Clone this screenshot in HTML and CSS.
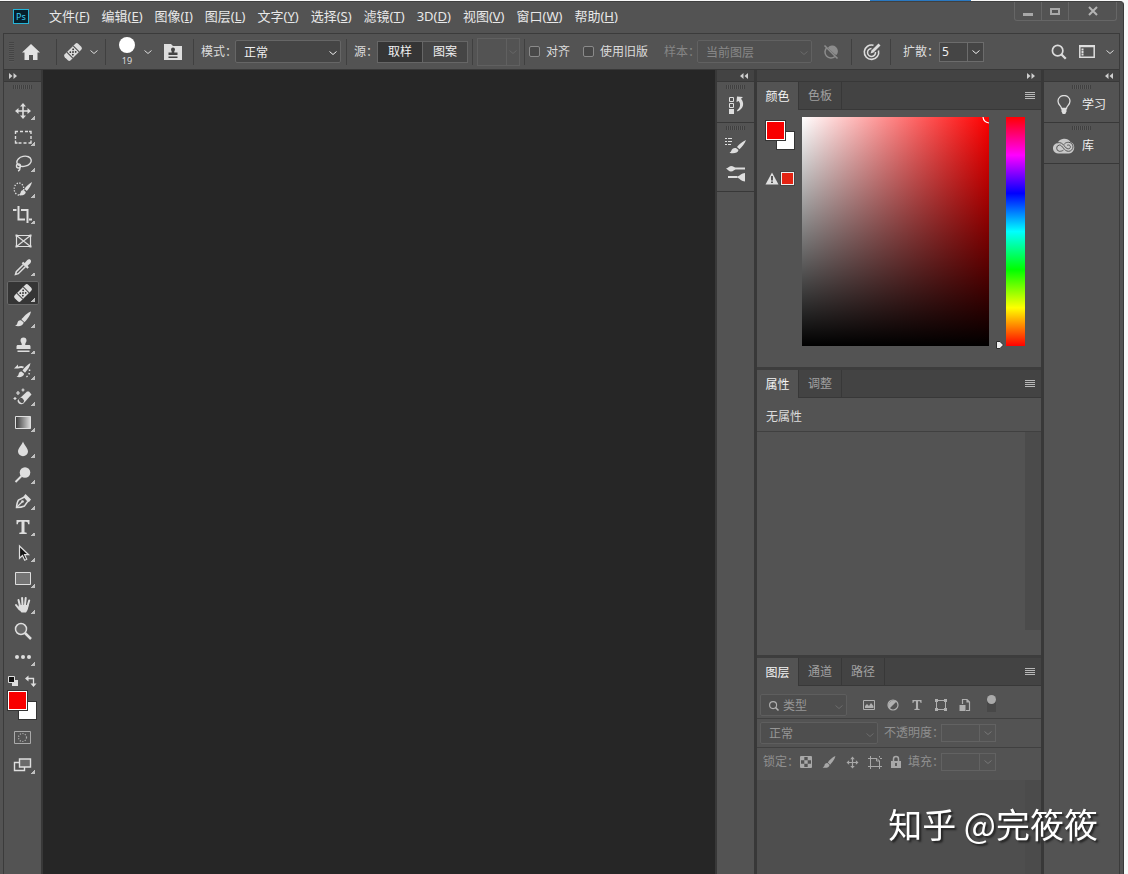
FILE: index.html
```html
<!DOCTYPE html>
<html lang="zh-CN">
<head>
    <meta charset="UTF-8">
    <meta name="viewport" content="width=device-width, initial-scale=1.0">
    <title>Photoshop</title>
    <link rel="stylesheet" href="styles.css">
</head>
<body>
    <!-- shared icons -->
    <svg class="sprite" aria-hidden="true">
        <symbol id="i-chevron" viewBox="0 0 8 8"><path d="M.5 2.500l3.500 3 3.500-3" fill="none" stroke="currentColor" stroke-width="1"/></symbol>
        <symbol id="i-menu" viewBox="0 0 10 8"><path d="M0 .5h10M0 2.500h10M0 4.500h10M0 6.500h10" stroke="currentColor" stroke-width="1"/></symbol>
        <symbol id="i-left" viewBox="0 0 8 6"><path d="M3.500 0v6L0 3zM8 0v6L4.500 3z" fill="currentColor"/></symbol>
        <symbol id="i-right" viewBox="0 0 8 6"><path d="M0 0v6l3.500-3zM4.500 0v6L8 3z" fill="currentColor"/></symbol>
        <symbol id="i-move" viewBox="0 0 20 20"><path d="M10 4v12M4 10h12" stroke="currentColor" stroke-width="1.600"/><path d="M10 2l3 3.500H7zM10 18l3-3.500H7zM2 10l3.500-3v6zM18 10l-3.500-3v6z" fill="currentColor"/></symbol>
        <symbol id="i-brush" viewBox="0 0 20 20"><path d="M18 2.500c-3.500 1.200-7.500 5-9.500 8l3 2.800C14.500 10 17.500 6 18 2.500z" fill="currentColor"/><path d="M8 11.300c-2.300-.2-3.300 1.200-3.600 2.700-.3 1.400-1 2.200-2.400 2.800 3.800 1 8.300.2 8.700-3.200z" fill="currentColor"/></symbol>
        <symbol id="i-bandaid" viewBox="0 0 20 20"><g transform="rotate(-45 10 10)"><rect x="0.500" y="5.800" width="19" height="8.400" rx="2" fill="currentColor"/><path d="M5.500 5.800v8.400M14.500 5.800v8.400" stroke="#484848" stroke-width="1"/><g fill="#333"><circle cx="10" cy="10" r=".9"/><circle cx="8" cy="8.200" r=".9"/><circle cx="12" cy="8.200" r=".9"/><circle cx="8" cy="11.800" r=".9"/><circle cx="12" cy="11.800" r=".9"/></g></g></symbol>
        <symbol id="i-search" viewBox="0 0 20 20"><circle cx="8.500" cy="8.500" r="5.800" fill="none" stroke="currentColor" stroke-width="1.900"/><path d="M12.500 12.500l5 5" stroke="currentColor" stroke-width="2.600"/></symbol>
        <symbol id="i-type" viewBox="0 0 20 20"><path d="M3.500 3h13v4.200h-1.400c-.2-1.800-.6-2.500-2.200-2.500h-1.400v10.600l2.200.5V17H6.300v-1.200l2.200-.5V4.700H7.100c-1.600 0-2 .7-2.200 2.500H3.500z" fill="currentColor"/></symbol>
    </svg>

    <div class="backdrop"><span class="backdrop-tab"></span></div>

    <div class="window">
        <header class="menubar">
            <span class="logo">Ps</span>
            <nav class="menus">
                <button>文件(<u>F</u>)</button>
                <button>编辑(<u>E</u>)</button>
                <button>图像(<u>I</u>)</button>
                <button>图层(<u>L</u>)</button>
                <button>文字(<u>Y</u>)</button>
                <button>选择(<u>S</u>)</button>
                <button>滤镜(<u>T</u>)</button>
                <button>3D(<u>D</u>)</button>
                <button>视图(<u>V</u>)</button>
                <button>窗口(<u>W</u>)</button>
                <button>帮助(<u>H</u>)</button>
            </nav>
            <div class="window-controls">
                <button aria-label="最小化"><svg width="12" height="12" viewBox="0 0 12 12"><path d="M1 8h10v3H1z" fill="#a8a8a8"/></svg></button>
                <button aria-label="最大化"><svg width="12" height="12" viewBox="0 0 12 12"><path d="M2 4h8v5H2z" fill="none" stroke="#a8a8a8" stroke-width="2"/></svg></button>
                <button class="close" aria-label="关闭"><svg width="12" height="12" viewBox="0 0 12 12"><path d="M2 2l8 8M10 2l-8 8" stroke="#b4b4b4" stroke-width="2"/></svg></button>
            </div>
        </header>

        <div class="frame">
            <div class="options">
                <span class="grip-v"></span>
                <button class="home" aria-label="主页"><svg width="18" height="16" viewBox="0 0 18 16"><path d="M9 0L0 8.500h2.500V16H7v-5h4v5h4.500V8.500H18z" fill="#e2e2e2"/></svg></button>
                <span class="divider"></span>
                <button class="preset" aria-label="污点修复画笔"><svg width="20" height="20"><use href="#i-bandaid"/></svg><svg width="8" height="8"><use href="#i-chevron"/></svg></button>
                <span class="divider"></span>
                <button class="preset brush-size" aria-label="画笔大小"><span class="brush-preview"><i></i>19</span><svg width="8" height="8"><use href="#i-chevron"/></svg></button>
                <button class="brush-panel" aria-label="画笔设置"><svg width="18" height="18" viewBox="0 0 18 18"><path d="M0 1h7l2 2h9v14H0z" fill="#dedede"/><path d="M7 6.500a2 2 0 114 0c0 1-.8 1.500-.8 3h3.300V12h-9V9.500h3.300c0-1.500-.8-2-.8-3zM4.500 13.500h9V15h-9z" fill="#444"/></svg></button>
                <span class="divider"></span>
                <label for="mode">模式：</label>
                <span class="select mode"><select id="mode"><option>正常</option></select><svg width="8" height="8"><use href="#i-chevron"/></svg></span>
                <span class="divider"></span>
                <span class="source-label">源：</span>
                <div class="segmented">
                    <button class="on">取样</button><button>图案</button>
                </div>
                <span class="divider"></span>
                <button class="pattern" aria-label="图案拾色器" disabled><span></span><svg width="8" height="8"><use href="#i-chevron"/></svg></button>
                <span class="divider"></span>
                <label class="check"><input type="checkbox">对齐</label>
                <label class="check legacy"><input type="checkbox">使用旧版</label>
                <label class="dim" for="sample">样本：</label>
                <span class="select sample"><select id="sample" disabled><option>当前图层</option></select><svg width="8" height="8"><use href="#i-chevron"/></svg></span>
                <button class="ignore" aria-label="忽略调整图层" disabled><svg width="16" height="16" viewBox="0 0 16 16"><path d="M4 3.500A5.500 5.500 0 1012 12.500" fill="none" stroke="currentColor" stroke-width="1.500"/><path d="M5 3.500a5.500 5.500 0 018.500 7.500L12 10.500 6 5z" fill="currentColor"/><path d="M1.500 1.500l13 13" stroke="currentColor" stroke-width="1.600"/></svg></button>
                <span class="divider"></span>
                <button class="pressure" aria-label="压力控制大小"><svg width="18" height="18" viewBox="0 0 18 18" fill="none" stroke="#dcdcdc"><path d="M10.500 2.300A7.200 7.200 0 1015.500 7.500" stroke-width="1.600"/><path d="M8.500 5.500A4 4 0 1012.500 9" stroke-width="1.500"/><path d="M7.500 10.500l1-3L15.500.5l2 2-7 7z" fill="#dcdcdc" stroke="none"/></svg></button>
                <span class="divider"></span>
                <label class="diffusion-label" for="diffusion">扩散：</label>
                <span class="combo"><input id="diffusion" type="text" value="5"><button aria-label="扩散选项"><svg width="8" height="8"><use href="#i-chevron"/></svg></button></span>
                <div class="options-end">
                    <button aria-label="搜索"><svg width="18" height="18"><use href="#i-search"/></svg></button>
                    <button aria-label="工作区"><svg width="16" height="13" viewBox="0 0 16 13"><path d="M.8 1.500h14.400v10.700H.8z" fill="none" stroke="#dedede" stroke-width="1.500"/><path d="M0 0h16v2H0zM2.500 3.500h2v2h-2zM2.500 6h2v2h-2zM2.500 8.500h2v2h-2z" fill="#dedede"/></svg></button>
                    <button aria-label="选择工作区"><svg width="8" height="8"><use href="#i-chevron"/></svg></button>
                </div>
            </div>

            <div class="workspace">
                <aside class="toolbar">
                    <div class="strip strip-left"><svg width="8" height="6"><use href="#i-right"/></svg></div>
                    <span class="grip"></span>
                    <div class="tools">
                        <button class="tool more" aria-label="移动"><svg viewBox="0 0 20 20"><use href="#i-move"/></svg></button>
                        <button class="tool more" aria-label="矩形选框"><svg viewBox="0 0 20 20"><path d="M2.500 7V4.500H5M7 4.500h3M12 4.500h3M16 4.500h2V7M18 9v3M18 13.500V16h-2.500M13.500 16h-3M8.500 16h-3M4.500 16h-2v-2.500M2.500 12V9" fill="none" stroke="#dedede" stroke-width="1.400"/></svg></button>
                        <button class="tool more" aria-label="套索"><svg viewBox="0 0 20 20" fill="none" stroke="#dedede" stroke-width="1.400"><ellipse cx="11" cy="8.300" rx="7.300" ry="5" transform="rotate(-12 11 8)"/><circle cx="5.500" cy="13" r="2"/><path d="M6.500 14.500c1 1.500 0 3-1.500 3.500"/></svg></button>
                        <button class="tool more" aria-label="快速选择"><svg viewBox="0 0 20 20"><ellipse cx="6" cy="10" rx="4.800" ry="6" fill="none" stroke="#dedede" stroke-width="1.300" stroke-dasharray="1.300 1.500"/><path d="M19 3c-3 1.500-6 4.500-7.500 7l2.300 2C16 9.500 18.500 6 19 3zM10.500 11c-2 0-2.600 1.300-2.900 2.500-.2 1-1 2-2 2.500 3.500.9 7 0 7.200-3z" fill="#dedede"/></svg></button>
                        <button class="tool more" aria-label="裁剪"><svg viewBox="0 0 20 20" fill="none" stroke="#dedede" stroke-width="2"><path d="M5.500 1v13.500H12M8 5h6.500v13M0 5h3.500M16 14.500h3"/></svg></button>
                        <button class="tool" aria-label="图框"><svg viewBox="0 0 20 20"><path d="M3.500 4.500h14v11h-14zM3.500 4.500l14 11M17.500 4.500l-14 11" fill="none" stroke="#dedede" stroke-width="1.200"/><path d="M2.500 3.500h2v2h-2zM16.500 3.500h2v2h-2zM2.500 14.500h2v2h-2zM16.500 14.500h2v2h-2z" fill="#dedede"/></svg></button>
                        <button class="tool more" aria-label="吸管"><svg viewBox="0 0 20 20"><path d="M10.500 7.500L3.300 14.700l-.8 2.800 2.800-.8 7.200-7.200" fill="none" stroke="#dedede" stroke-width="1.500"/><path d="M8.700 6.200l1.500-1.500 1.500 1.200 2.400-2.700c2.600-2.300 5.300.7 3.200 3l-2.700 2.500 1.300 1.500-1.500 1.500z" fill="#dedede"/></svg></button>
                        <button class="tool more active" aria-label="污点修复画笔"><svg viewBox="0 0 20 20"><use href="#i-bandaid"/></svg></button>
                        <button class="tool more" aria-label="画笔"><svg viewBox="0 0 20 20"><use href="#i-brush"/></svg></button>
                        <button class="tool more" aria-label="仿制图章"><svg viewBox="0 0 20 20"><path d="M7.500 5.500a3 3 0 116 0c0 2-1.300 2-1.300 4.500h3.800c1 0 1.500.6 1.500 1.500V14h-14v-2.500c0-.9.500-1.500 1.500-1.500h3.800c0-2.500-1.300-2.500-1.300-4.500zM4.500 15.500h12V17h-12z" fill="#dedede"/></svg></button>
                        <button class="tool more" aria-label="历史记录画笔"><svg viewBox="0 0 20 20"><path d="M17.500 2c-3 1.500-6.500 5-8 7.500l2.500 2.200C14.300 9 17.300 5.500 17.500 2zM8.500 10.500c-2.200 0-2.700 1.500-3 3-.2 1-.8 1.800-2 2.300 3 1 7.300.2 7.600-3z" fill="#dedede"/><path d="M1 7.500l4-4v2.300c2-.8 4-1 6 0l-1 1.500c-2-.6-3.500-.5-5 .2z" fill="#dedede"/><path d="M16.500 8.500c.5 4-1 7-5 8" fill="none" stroke="#dedede" stroke-width="1.500" stroke-dasharray="1.500 2"/></svg></button>
                        <button class="tool more" aria-label="橡皮擦"><svg viewBox="0 0 20 20"><path d="M14 4.500h2l2.500 3-8 9c-2 1.500-6 .5-6-3z" fill="#dedede"/><ellipse cx="8.500" cy="13.500" rx="2.200" ry="2.800" transform="rotate(-45 8.500 13.500)" fill="#535353"/><path d="M5 4v4M3 6h4M10 1.500v3M8.500 3h3M2 10v3M.5 11.500h3" stroke="#dedede" stroke-width="1.200"/></svg></button>
                        <button class="tool more" aria-label="渐变"><svg viewBox="0 0 20 20"><defs><linearGradient id="grad"><stop stop-color="#383838"/><stop offset="1" stop-color="#ddd"/></linearGradient></defs><path d="M2.500 3.500h15v12h-15z" fill="url(#grad)" stroke="#dedede"/></svg></button>
                        <button class="tool more" aria-label="模糊"><svg viewBox="0 0 20 20"><path d="M10 2.500c1 3.500 5 6.500 5 10a5 4.700 0 01-10 0c0-3.500 4-6.500 5-10z" fill="#dedede"/></svg></button>
                        <button class="tool more" aria-label="减淡"><svg viewBox="0 0 20 20"><circle cx="12" cy="7.500" r="5.300" fill="#dedede"/><path d="M8.500 11l-6 6" stroke="#dedede" stroke-width="1.900"/></svg></button>
                        <button class="tool more" aria-label="钢笔"><svg viewBox="0 0 20 20"><path d="M3.500 16.500c.2-3 .5-5.500 2-7.500l6-3 3.500 4-3.500 5c-2.500 1.200-5 1.500-8 1.500z" fill="none" stroke="#dedede" stroke-width="1.500"/><path d="M12.500 3l5.500 5.500-2.200 2.700-5.300-5.700z" fill="#dedede"/><path d="M4 16l5-5" stroke="#dedede" stroke-width="1.200"/><circle cx="9.500" cy="10.500" r="1.300" fill="#dedede"/></svg></button>
                        <button class="tool more" aria-label="文字"><svg viewBox="0 0 20 20"><use href="#i-type"/></svg></button>
                        <button class="tool more" aria-label="路径选择"><svg viewBox="0 0 20 20"><path d="M6.500 3v12.300l3-2.800 2.200 4.700 2-1-2.100-4.500h4z" fill="#161616" stroke="#dedede" stroke-width="1.200"/></svg></button>
                        <button class="tool more" aria-label="矩形"><svg viewBox="0 0 20 20"><path d="M2.500 3.500h15v12h-15z" fill="#747474" stroke="#dedede"/></svg></button>
                        <button class="tool more" aria-label="抓手"><svg viewBox="0 0 20 20" fill="none" stroke="#dedede" stroke-linecap="round"><path d="M7 11L5.500 5M9.500 10l-.4-7M12 10l.7-7M14.500 11l1.700-5.500M6.500 14.500L3 10" stroke-width="2"/><path d="M6 10h9.500c0 3-.7 5-2.500 7.500H8.500C7 16 6 14 5 12.500z" fill="#dedede" stroke="none"/></svg></button>
                        <button class="tool" aria-label="缩放"><svg viewBox="0 0 20 20"><circle cx="8" cy="8" r="5.500" fill="#666" stroke="#dedede" stroke-width="1.500"/><path d="M12 12l6 6" stroke="#dedede" stroke-width="2.500"/></svg></button>
                        <button class="tool more" aria-label="编辑工具栏"><svg viewBox="0 0 20 20" fill="#dedede"><circle cx="4" cy="10" r="2"/><circle cx="10" cy="10" r="2"/><circle cx="16" cy="10" r="2"/></svg></button>
                    </div>
                    <div class="swap-row">
                        <button aria-label="默认颜色"><svg width="11" height="11" viewBox="0 0 11 11"><path d="M4 4h6v6H4z" fill="#dedede"/><path d="M.5.5h6v6h-6z" fill="#111" stroke="#dedede"/></svg></button>
                        <button aria-label="切换颜色"><svg width="12" height="12" viewBox="0 0 12 12"><path d="M3 3.500h5.500V9" fill="none" stroke="#dedede" stroke-width="1.300"/><path d="M0 3.500L3.500.5v6zM8.500 12L5.500 8.500h6z" fill="#dedede"/></svg></button>
                    </div>
                    <div class="swatches"><button class="back" aria-label="背景色"></button><button class="fore" aria-label="前景色"></button></div>
                    <button class="tool mask" aria-label="快速蒙版"><svg viewBox="0 0 20 20" fill="none" stroke="#aaa"><path d="M1.500 3.500h16v12h-16z"/><circle cx="9.500" cy="9.500" r="4" stroke-width="1.200" stroke-dasharray="1.200 1.400"/></svg></button>
                    <button class="tool more" aria-label="屏幕模式"><svg viewBox="0 0 20 20" fill="#535353" stroke="#dedede" stroke-width="1.400"><path d="M1.500 7.500h10v8h-10z"/><path d="M6.500 4h11v8h-11z" fill="#6a6a6a"/></svg></button>
                </aside>

                <main class="canvas"></main>

                <aside class="dock">
                    <div class="strip strip-right"><svg width="8" height="6"><use href="#i-left"/></svg></div>
                    <div class="dock-group">
                        <span class="grip"></span>
                        <button aria-label="历史记录"><svg width="20" height="20" viewBox="0 0 20 20"><path d="M3.500 2.500h4v4h-4zM3.500 8.500h4v4h-4z" fill="none" stroke="#dedede"/><path d="M3 14h5v5H3z" fill="#dedede"/><path d="M10.500 7l.5-5.500L17 2l-2 1.800c3.500 4 3 9.700-3.500 12.700l-.5-1.200c3.500-2.500 4-6.300 1.700-9.300z" fill="#dedede"/></svg></button>
                    </div>
                    <div class="dock-group">
                        <span class="grip"></span>
                        <button aria-label="画笔设置"><svg width="22" height="20" viewBox="0 0 22 20"><path d="M0 2.500h2M3 2.500h4M0 5.500h2M3 5.500h4M0 8.500h2M3 8.500h3" stroke="#dedede"/><path d="M21 4c-4 1.500-7 4.500-9 7l2.500 2.300C17 11 20 7.500 21 4zM11 12c-2.500-.5-4 .8-4.500 2.300-.3 1.200-1 2-2 2.400 4 1.300 8.500.2 9-2.700z" fill="#dedede"/></svg></button>
                        <button aria-label="画笔"><svg width="20" height="20" viewBox="0 0 20 20"><path d="M0 4.500c2 0 3-2.500 5-2.500 2.500 0 3 1.300 4.500 1.500h9.500v2H9.500C8 5.700 7.500 7.500 5 7.500 3 7.500 2 5.500 0 4.500zM2 12h9v2H2zM11 12.500c3-.5 4.500-3.500 8-3.500v8.500c-3.500 0-5-3-8-4z" fill="#dedede"/></svg></button>
                    </div>
                </aside>

                <section class="panels">
                    <div class="strip strip-right"><svg width="8" height="6"><use href="#i-right"/></svg></div>

                    <div class="panel">
                        <div class="tabs">
                            <button class="tab current">颜色</button><button class="tab">色板</button>
                            <button class="panel-menu" aria-label="面板菜单"><svg width="10" height="8"><use href="#i-menu"/></svg></button>
                        </div>
                        <div class="color-body">
                            <div class="color-side">
                                <div class="swatches"><button class="back" aria-label="背景色"></button><button class="fore" aria-label="前景色"></button></div>
                                <div class="gamut"><svg width="14" height="13" viewBox="0 0 14 13"><path d="M7 .5L13.500 12.500H.5z" fill="#e0e0e0"/><path d="M7 4v4.500M7 9.500V11" stroke="#333" stroke-width="1.600"/></svg><button aria-label="溢色校正"></button></div>
                            </div>
                            <div class="field"><svg class="picker" width="10" height="10" viewBox="0 0 10 10"><path d="M4 0c.3 3 2.500 5.500 6 6" fill="none" stroke="#fff" stroke-width="1.200"/></svg></div>
                            <div class="hue"><svg class="hue-mark" width="8" height="8" viewBox="0 0 8 8"><path d="M.5.5H4L7.500 4 4 7.500H.5z" fill="#eee" stroke="#2c2c2c"/></svg></div>
                        </div>
                    </div>

                    <div class="panel">
                        <div class="tabs">
                            <button class="tab current">属性</button><button class="tab">调整</button>
                            <button class="panel-menu" aria-label="面板菜单"><svg width="10" height="8"><use href="#i-menu"/></svg></button>
                        </div>
                        <p class="empty-text">无属性</p>
                        <div class="props-body"><span class="track"></span></div>
                    </div>

                    <div class="panel layers">
                        <div class="tabs">
                            <button class="tab current">图层</button><button class="tab">通道</button><button class="tab">路径</button>
                            <button class="panel-menu" aria-label="面板菜单"><svg width="10" height="8"><use href="#i-menu"/></svg></button>
                        </div>
                        <div class="layer-row filter-row">
                            <span class="select filter"><svg class="filter-icon" width="12" height="12"><use href="#i-search"/></svg><select aria-label="图层过滤" disabled><option>类型</option></select><svg width="8" height="8"><use href="#i-chevron"/></svg></span>
                            <div class="filter-icons">
                                <button aria-label="像素图层"><svg width="14" height="14" viewBox="0 0 14 14"><path d="M1.500 2.500h11v9h-11z" fill="none" stroke="currentColor"/><path d="M3 10V8l2-2 2 2 2-3 2.500 3v2z" fill="currentColor"/></svg></button>
                                <button aria-label="调整图层"><svg width="14" height="14" viewBox="0 0 14 14"><circle cx="7" cy="7" r="5" fill="none" stroke="currentColor" stroke-width="1.200"/><path d="M10.500 3.500A5 5 0 003.500 10.500z" fill="currentColor"/></svg></button>
                                <button aria-label="文字图层"><svg width="14" height="14"><use href="#i-type"/></svg></button>
                                <button aria-label="形状图层"><svg width="14" height="14" viewBox="0 0 14 14"><path d="M2.500 2.500h9v9h-9z" fill="none" stroke="currentColor"/><path d="M1 1h3v3H1zM10 1h3v3h-3zM1 10h3v3H1zM10 10h3v3h-3z" fill="currentColor"/></svg></button>
                                <button aria-label="智能对象"><svg width="14" height="14" viewBox="0 0 14 14"><path d="M4.500 6V1.500H9L11.500 4v8.500H8M9 1.500V4h2.500" fill="none" stroke="currentColor" stroke-width="1.200"/><path d="M1.500 7h6v6h-6z" fill="currentColor"/></svg></button>
                            </div>
                            <button class="toggle" aria-label="打开或关闭图层过滤"></button>
                        </div>
                        <div class="layer-row">
                            <span class="select blend"><select aria-label="混合模式" disabled><option>正常</option></select><svg width="8" height="8"><use href="#i-chevron"/></svg></span>
                            <label class="opacity-label" for="opacity">不透明度：</label>
                            <span class="combo off"><input id="opacity" type="text" disabled><button aria-label="不透明度选项" disabled><svg width="8" height="8"><use href="#i-chevron"/></svg></button></span>
                        </div>
                        <div class="layer-row last">
                            <span class="lock-label">锁定：</span>
                            <div class="lock-icons">
                                <button aria-label="锁定透明像素"><svg width="14" height="14" viewBox="0 0 14 14"><path d="M1.500 1.500h11v11h-11z" fill="none" stroke="currentColor"/><path d="M2 2h3.300v3.300H2zM8.700 2H12v3.300H8.700zM5.300 5.300h3.400v3.400H5.300zM2 8.700h3.300V12H2zM8.700 8.700H12V12H8.700z" fill="currentColor"/></svg></button>
                                <button aria-label="锁定图像像素"><svg width="16" height="16"><use href="#i-brush"/></svg></button>
                                <button aria-label="锁定位置"><svg width="15" height="15"><use href="#i-move"/></svg></button>
                                <button aria-label="防止自动嵌套"><svg width="14" height="14" viewBox="0 0 14 14" fill="none" stroke="currentColor"><path d="M2.500 1v13M0 3.500h9l2.500 2.500v8M0 11.500h14M8.500 3.500V6h3M12 3.500h2M11.500 1v1.500"/></svg></button>
                                <button aria-label="锁定全部"><svg width="12" height="14" viewBox="0 0 12 14"><path d="M3.500 7V4a2.500 2.500 0 015 0v3" fill="none" stroke="currentColor" stroke-width="1.500"/><path d="M1 6h10v7H1z" fill="currentColor"/><path d="M6 8v3" stroke="#444" stroke-width="1.500"/></svg></button>
                            </div>
                            <label class="fill-label" for="fill">填充：</label>
                            <span class="combo off"><input id="fill" type="text" disabled><button aria-label="填充选项" disabled><svg width="8" height="8"><use href="#i-chevron"/></svg></button></span>
                        </div>
                        <div class="layer-list"><span class="track"></span></div>
                    </div>
                </section>

                <aside class="side">
                    <div class="strip strip-right"><svg width="8" height="6"><use href="#i-left"/></svg></div>
                    <div class="side-group">
                        <span class="grip"></span>
                        <button><svg width="20" height="20" viewBox="0 0 20 20"><path d="M7.500 13.500c0-2.500-3.500-3.500-3.500-7.500a6 5.500 0 0112 0c0 4-3.500 5-3.500 7.500z" fill="none" stroke="#dedede" stroke-width="1.300"/><path d="M7.500 13.500h5v3L11.300 19H8.700l-1.200-2.500z" fill="#dedede"/></svg>学习</button>
                    </div>
                    <div class="side-group">
                        <span class="grip"></span>
                        <button><svg width="22" height="16" viewBox="0 0 22 16"><path d="M6 15.500A5.300 5.300 0 014.500 5 7.500 7.500 0 0117.500 4 6 6 0 0116 15.500z" fill="#c9c9c9"/><path d="M10.500 12c-1.200 1-2.500 1.300-4.200 1.300a3.200 3.200 0 010-6.300c3.500 0 4.500 6.300 9.200 6.300a4.500 4.500 0 000-9c-3.500 0-4.500 2.200-4.500 2.200M4 4.800c3.500-.8 5.500.7 7 2.700s2.500 3.300 4.500 3.300c2.500 0 2.500-3.800 0-3.800-1 0-1.500.5-1.500.5" fill="none" stroke="#555" stroke-width="1"/></svg>库</button>
                    </div>
                </aside>
            </div>
        </div>
    </div>

    <div class="watermark">知乎 @完筱筱</div>
</body>
</html>
```
FILE: styles.css
```css
* { box-sizing: border-box; }

body {
    margin: 0;
    min-height: 100vh;
    display: flex; flex-direction: column;
    background: #f8f8f8;
    color: #dcdcdc;
    font-family: "Noto Sans", "Noto Sans CJK SC", sans-serif;
    font-size: 12px; line-height: 16px;
}
button { margin: 0; padding: 0; border: none; background: none; color: inherit; font: inherit; cursor: pointer; }
button:disabled { cursor: default; }
input, select { font: inherit; color: inherit; }
svg { display: block; flex: none; }
.sprite { position: absolute; width: 0; height: 0; }

/* window */
.backdrop { height: 1px; display: flex; justify-content: flex-end; }
.backdrop-tab { width: 101px; margin-right: 157px; background: #2a78c0; }
.window {
    flex: 1; display: flex; flex-direction: column;
    margin-right: 4px;
    background: #535353;
    border-top: 1px solid #404040; border-right: 1px solid #383838;
    border-top-right-radius: 4px;
}
.menubar { height: 31px; display: flex; align-items: center; padding: 0 0 3px 13px; }
.logo {
    width: 16px; height: 15px;
    border: 1px solid #26b4d8; background: #06202c; color: #3ccbf0;
    font-size: 9px; line-height: 13px; text-align: center;
}
.menus { display: flex; margin-left: 14px; font-size: 13px; color: #e8e8e8; }
.menus button { padding: 0 6px; white-space: nowrap; }
.window-controls { display: flex; align-self: flex-start; height: 19px; margin: 0 6px 0 auto; border: 1px solid #666; border-top: none; border-radius: 0 0 3px 3px; }
.window-controls button { width: 27px; display: grid; place-items: center; border-right: 1px solid #666; }
.window-controls .close { width: 47px; border-right: none; }

.frame { flex: 1; display: flex; flex-direction: column; margin: 0 3px; border: 1px solid #3b3b3b; border-bottom: none; }

/* options bar */
.options { height: 36px; display: flex; align-items: center; border-bottom: 1px solid #383838; white-space: nowrap; }
.options > * { flex: none; }
.grip-v { width: 5px; height: 20px; margin-left: 5px; background: repeating-linear-gradient(#444 0 1px, #585858 1px 2px); }
.home { margin: 0 16px 0 8px; }
.divider { width: 1px; height: 26px; background: #404040; }
.preset { display: flex; align-items: center; gap: 7px; padding: 0 7px 0 6px; }
.brush-size { gap: 8px; padding: 0 12px; }
.brush-preview { width: 18px; display: flex; flex-direction: column; align-items: center; font-size: 9px; line-height: 12px; gap: 2px; }
.brush-preview i { width: 16px; height: 16px; border-radius: 50%; background: #fff; }
.brush-panel { margin-right: 11px; }
.options label, .source-label { margin-left: 7px; }
.select { position: relative; display: flex; height: 23px; border: 1px solid #666; border-radius: 2px; background: #454545; }
.select select { width: 100%; height: 100%; appearance: none; border: none; background: none; padding: 2px 20px 0 8px; opacity: 1; }
.select svg { position: absolute; right: 3px; top: 8px; pointer-events: none; }
.mode { width: 106px; margin: 0 5px 0 -2px; color: #f0f0f0; }
.segmented { display: flex; width: 91px; height: 22px; margin: 0 4px 0 -1px; border: 1px solid #666; color: #f0f0f0; }
.segmented button { flex: 1; background: #454545; }
.segmented .on { background: #353535; border-right: 1px solid #666; }
.pattern { display: flex; align-items: center; justify-content: space-between; width: 43px; height: 28px; margin: 0 4px; border: 1px solid #606060; padding-right: 2px; color: #666; }
.pattern span { width: 29px; height: 26px; border-right: 1px solid #606060; }
.options .check { display: flex; align-items: center; gap: 6px; margin-left: 4px; }
.options .legacy { margin-left: 13px; }
.check input { appearance: none; width: 11px; height: 11px; margin: 0; border: 1px solid #8a8a8a; border-radius: 2px; background: #484848; }
.options .dim { margin-left: 16px; color: #858585; }
.sample { width: 115px; margin-left: -3px; background: #505050; color: #888; border-color: #616161; }
.sample svg { color: #6a6a6a; }
.ignore { margin: 0 12px 0 11px; color: #8c8c8c; }
.pressure { margin: 0 9px 0 11px; }
.options .diffusion-label { margin-left: 12px; }
.combo { display: flex; width: 45px; height: 20px; border: 1px solid #6c6c6c; background: #454545; color: #f0f0f0; }
.combo input { flex: 1; width: 0; min-width: 0; border: none; background: none; padding: 0 2px; outline: none; }
.combo button { width: 16px; display: grid; place-items: center; border-left: 1px solid #6c6c6c; }
.options-end { display: flex; align-items: center; gap: 11px; margin: 0 5px 0 auto; }

/* workspace columns */
.workspace { flex: 1; display: flex; background: #383838; }
.workspace > * { background: #535353; }
.strip { height: 12px; display: flex; align-items: center; padding: 0 6px; background: #434343; border-bottom: 1px solid #383838; color: #cfcfcf; }
.strip-left { padding-left: 5px; }
.strip-right { justify-content: flex-end; }
.grip { display: block; width: 19px; height: 4px; margin: 3px auto 0; background: repeating-linear-gradient(90deg, #404040 0 1px, #5b5b5b 1px 2px); }

.toolbar { width: 37px; margin-right: 2px; }
.tools { display: flex; flex-direction: column; gap: 2px; margin-top: 10px; color: #dedede; }
.tool { position: relative; display: grid; place-items: center; width: 32px; height: 24px; margin-left: 3px; border-radius: 2px; }
.tool svg { width: 20px; height: 20px; }
.tool.active { background: #353535; box-shadow: 0 0 0 1px #696969 inset; }
.more::after { content: ""; position: absolute; right: 4px; bottom: 3px; width: 4px; height: 4px; background: linear-gradient(135deg, transparent 50%, #c0c0c0 50%); }
.swap-row { display: flex; gap: 6px; margin: 6px 0 0 4px; }
.swatches { position: relative; width: 29px; height: 29px; }
.swatches button { position: absolute; width: 19px; height: 19px; border: 1px solid #333; }
.swatches .back { right: 0; bottom: 0; background: #fff; }
.swatches .fore { left: 0; top: 0; background: #f80000; border-color: #fff; outline: 1px solid #333; }
.toolbar .swatches { margin: 4px 0 6px 4px; }
.mask { margin-bottom: 3px; }

.workspace > .canvas { flex: 1; background: #262626; }

.dock { width: 37px; margin-left: 2px; }
.dock-group, .side-group { display: flow-root; height: 41px; border-bottom: 1px solid #383838; }
.dock-group + .dock-group { height: 69px; }
.dock-group button { display: grid; place-items: center; width: 37px; height: 28px; margin-top: 2px; }
.dock-group button + button { margin-top: 0; }

/* panels */
.panels { width: 284px; margin: 0 3px; display: flex; flex-direction: column; }
.panel { border-bottom: 3px solid #3d3d3d; }
.tabs { display: flex; height: 28px; background: #434343; }
.tab { width: 43px; padding-top: 1px; border: solid #383838; border-width: 0 1px 1px 0; color: #a0a0a0; }
.tab.current { width: 42px; background: #535353; border-bottom: none; color: #f4f4f4; }
.panel-menu { flex: 1; display: flex; align-items: center; justify-content: flex-end; padding-right: 6px; border-bottom: 1px solid #383838; color: #b8b8b8; cursor: default; }
.color-body { display: flex; height: 257px; padding: 7px 16px 21px 9px; }
.color-side { width: 36px; padding-top: 4px; }
.gamut { display: flex; align-items: center; gap: 2px; margin: 22px 0 0 -1px; }
.gamut button { width: 13px; height: 13px; background: #e42313; border: 1px solid #eee; outline: 1px solid #444; }
.field { position: relative; flex: 1; background: linear-gradient(transparent, #000), linear-gradient(90deg, #fff, #f00); }
.picker { position: absolute; top: 0; right: 0; }
.hue { position: relative; width: 19px; margin-left: 17px; background: linear-gradient(#f00, #f0f, #00f, #0ff, #0f0, #ff0, #f00); }
.hue-mark { position: absolute; left: -10px; bottom: -3px; }
.empty-text { margin: 0; height: 34px; padding: 0 9px; line-height: 38px; border-bottom: 1px solid #404040; }
.props-body { display: flex; height: 223px; justify-content: flex-end; padding-bottom: 25px; }
.track { width: 16px; background: #4b4b4b; }

.layers { flex: 1; display: flex; flex-direction: column; border-bottom: none; }
.layer-row { display: flex; align-items: center; height: 29px; padding-left: 3px; border-bottom: 1px solid #404040; color: #8f8f8f; white-space: nowrap; }
.filter-row { height: 33px; padding-top: 6px; }
.layer-row .select { height: 22px; background: #4e4e4e; border-color: #5e5e5e; color: #969696; }
.layer-row .select svg { color: #6c6c6c; }
.filter { width: 87px; }
.filter select { padding-left: 22px; }
.layer-row .filter .filter-icon { left: 7px; top: 5px; color: #b0b0b0; }
.filter-icons { display: flex; gap: 10px; margin-left: 15px; color: #b0b0b0; }
.toggle { position: relative; width: 9px; height: 14px; margin-left: 15px; background: #484848; }
.toggle::before { content: ""; position: absolute; left: 0; top: -3px; width: 9px; height: 9px; border-radius: 50%; background: #aaa; }
.blend { width: 118px; }
.opacity-label { width: 57px; margin-left: 6px; }
.combo.off { width: 55px; height: 18px; background: none; border-color: #626262; }
.combo.off button { border-color: #626262; color: #777; }
.lock-label { width: 33px; padding-left: 3px; }
.lock-icons { display: flex; align-items: center; gap: 8px; margin-left: 6px; color: #a8a8a8; }
.fill-label { width: 33px; margin-left: 6px; }
.last { height: 32px; padding-bottom: 4px; border-bottom: none; }
.layer-list { flex: 1; display: flex; justify-content: flex-end; background: #4e4e4e; }

.side { width: 75px; }
.side-group button { display: flex; align-items: center; gap: 7px; height: 30px; margin-top: 1px; padding-left: 9px; color: #f0f0f0; }
.side-group svg { width: 22px; }

.watermark { position: fixed; right: 30px; bottom: 26px; color: #fff; font-family: "Noto Sans CJK SC", sans-serif; font-size: 34px; line-height: 48px; text-shadow: 2px 2px 2px #222; }
```
